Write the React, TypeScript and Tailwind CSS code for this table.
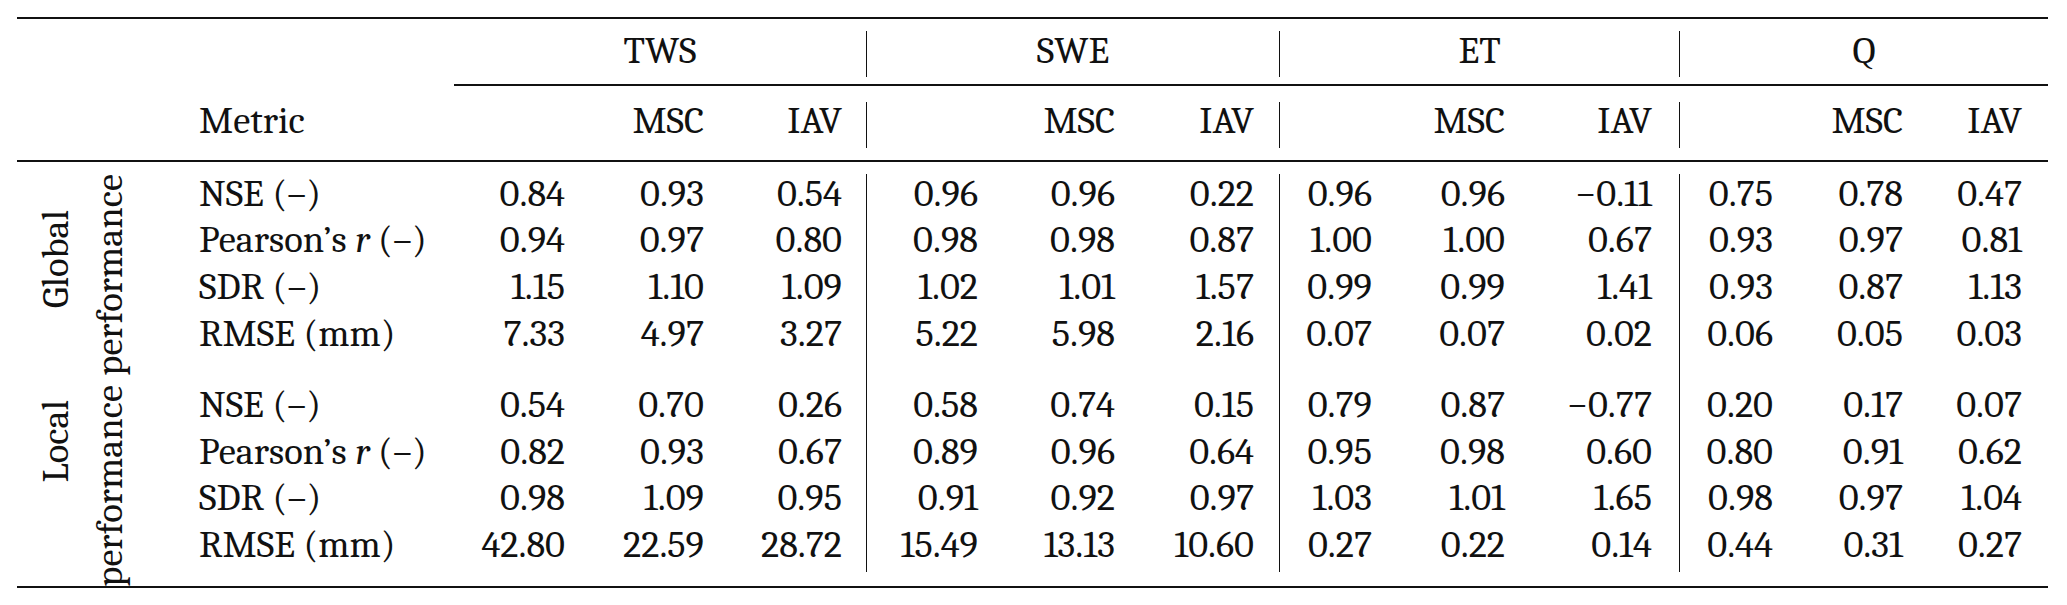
import React from "react";

const GRID =
  "grid grid-cols-[173px_264px_111px_139px_163px_111px_137px_165px_92px_133px_175px_93px_130px_145px]";

// right-aligned numeric columns; the last of each block carries the vertical rule
const colCls = [
  "text-right",
  "text-right",
  "text-right pr-[24px] border-r border-[#111]",
  "text-right",
  "text-right",
  "text-right pr-[25px] border-r border-[#111]",
  "text-right",
  "text-right",
  "text-right pr-[27px] border-r border-[#111]",
  "text-right",
  "text-right",
  "text-right pr-[26px]",
];

const MINUS = "\u2212";

type Row = { metric: React.ReactNode; values: string[] };

const pearson = (
  <>
    Pearson’s <i>r</i> (–)
  </>
);

const globalRows: Row[] = [
  { metric: "NSE (–)", values: ["0.84", "0.93", "0.54", "0.96", "0.96", "0.22", "0.96", "0.96", `${MINUS}0.11`, "0.75", "0.78", "0.47"] },
  { metric: pearson, values: ["0.94", "0.97", "0.80", "0.98", "0.98", "0.87", "1.00", "1.00", "0.67", "0.93", "0.97", "0.81"] },
  { metric: "SDR (–)", values: ["1.15", "1.10", "1.09", "1.02", "1.01", "1.57", "0.99", "0.99", "1.41", "0.93", "0.87", "1.13"] },
  { metric: "RMSE (mm)", values: ["7.33", "4.97", "3.27", "5.22", "5.98", "2.16", "0.07", "0.07", "0.02", "0.06", "0.05", "0.03"] },
];

const localRows: Row[] = [
  { metric: "NSE (–)", values: ["0.54", "0.70", "0.26", "0.58", "0.74", "0.15", "0.79", "0.87", `${MINUS}0.77`, "0.20", "0.17", "0.07"] },
  { metric: pearson, values: ["0.82", "0.93", "0.67", "0.89", "0.96", "0.64", "0.95", "0.98", "0.60", "0.80", "0.91", "0.62"] },
  { metric: "SDR (–)", values: ["0.98", "1.09", "0.95", "0.91", "0.92", "0.97", "1.03", "1.01", "1.65", "0.98", "0.97", "1.04"] },
  { metric: "RMSE (mm)", values: ["42.80", "22.59", "28.72", "15.49", "13.13", "10.60", "0.27", "0.22", "0.14", "0.44", "0.31", "0.27"] },
];

function GroupLabel({ first, firstTop, secondTop }: { first: string; firstTop: string; secondTop: string }) {
  return (
    <div className="row-span-4 flex items-start pl-[20px]">
      <span className={`[writing-mode:vertical-rl] rotate-180 ${firstTop}`}>{first}</span>
      <span className={`[writing-mode:vertical-rl] rotate-180 ml-[15px] ${secondTop}`}>performance</span>
    </div>
  );
}

function DataRows({ rows }: { rows: Row[] }) {
  return (
    <>
      {rows.map((r, i) => (
        <React.Fragment key={i}>
          <div className="pl-[9px] pt-[0.5px] whitespace-nowrap">{r.metric}</div>
          {r.values.map((v, j) => (
            <div key={j} className={`pt-[0.5px] ${colCls[j]}`}>
              {v}
            </div>
          ))}
        </React.Fragment>
      ))}
    </>
  );
}

export default function App() {
  return (
    <div className="min-h-screen bg-white text-[#111] font-serif text-[38.5px] leading-none">
      <div className="ml-[17px] w-[2031px] pt-[17px]">
        <div className="h-[2px] bg-[#111]" />
        <div className="h-[12px]" />

        {/* block names */}
        <div className={`${GRID} h-[46px]`}>
          <div className="col-span-2" />
          <div className="col-span-3 text-center pt-[0.5px] border-r border-[#111]">TWS</div>
          <div className="col-span-3 text-center pt-[0.5px] border-r border-[#111]">SWE</div>
          <div className="col-span-3 text-center pt-[0.5px] border-r border-[#111]">ET</div>
          <div className="col-span-3 text-center pt-[0.5px]">Q</div>
        </div>

        <div className="h-[7px]" />
        <div className="ml-[437px] h-[1.5px] bg-[#111]" />
        <div className="h-[16px]" />

        {/* sub headers */}
        <div className={`${GRID} h-[46px]`}>
          <div />
          <div className="pl-[9px] pt-[0.5px]">Metric</div>
          {["", "MSC", "IAV", "", "MSC", "IAV", "", "MSC", "IAV", "", "MSC", "IAV"].map((h, j) => (
            <div key={j} className={`pt-[0.5px] ${colCls[j]}`}>
              {h}
            </div>
          ))}
        </div>

        <div className="h-[12px]" />
        <div className="h-[2px] bg-[#111]" />
        <div className="h-[12.5px]" />

        <div className={`${GRID} grid-rows-[repeat(4,46.7px)_24.7px_repeat(4,46.7px)]`}>
          <GroupLabel first="Global" firstTop="mt-[36px]" secondTop="mt-0" />
          <DataRows rows={globalRows} />

          <div />
          <div />
          {colCls.map((c, j) => (
            <div key={j} className={c} />
          ))}

          <GroupLabel first="Local" firstTop="mt-[15px]" secondTop="mt-0" />
          <DataRows rows={localRows} />
        </div>

        <div className="h-[13.5px]" />
        <div className="h-[2px] bg-[#111]" />
      </div>
    </div>
  );
}
